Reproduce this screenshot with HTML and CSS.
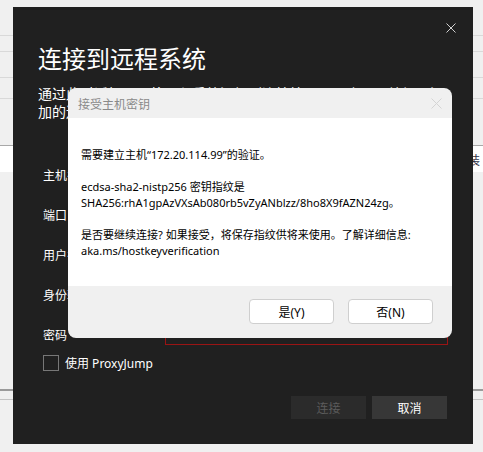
FILE: index.html
```html
<!DOCTYPE html>
<html lang="zh-CN">
<head>
<meta charset="utf-8">
<title>连接到远程系统</title>
<link rel="stylesheet" href="styles.css">
</head>
<body>
<div class="page">
  <div class="bg-row r1"></div>
  <div class="bg-row r2"></div>
  <div class="bg-row r3"></div>
  <div class="bg-row r4"></div>
  <div class="bg-row r5"></div>
  <div class="bg-row r6"><span class="bg-text">装</span></div>
  <div class="bg-row r7"></div>
  <div class="bg-row r8"></div>
  <div class="bg-row r9"></div>

  <div class="dialog">
    <button class="dialog-close" aria-label="关闭">
      <svg width="10" height="10" viewBox="0 0 10 10"><path d="M0.5 0.5L9.5 9.5M9.5 0.5L0.5 9.5" stroke="#d0d0d0" stroke-width="1" fill="none"/></svg>
    </button>
    <h1 class="dialog-title">连接到远程系统</h1>
    <p class="dialog-desc">通过此对话框可以将远程系统添加到连接管理器，也可以编辑已添加的连接。</p>
    <div class="form">
      <div class="form-row"><span class="label">主机名 *</span><span class="input"></span></div>
      <div class="form-row"><span class="label">端口 *</span><span class="input"></span></div>
      <div class="form-row"><span class="label">用户名 *</span><span class="input"></span></div>
      <div class="form-row"><span class="label">身份验证类型</span><span class="input"></span></div>
      <div class="form-row"><span class="label">密码 *</span><span class="input input-error"></span></div>
    </div>
    <label class="check-row"><span class="checkbox"></span><span class="check-label">使用 ProxyJump</span></label>
    <div class="dialog-actions">
      <button class="btn-dark btn-disabled">连接</button>
      <button class="btn-dark">取消</button>
    </div>
  </div>

  <div class="modal">
    <div class="modal-header">
      <span class="modal-title">接受主机密钥</span>
      <span class="modal-close">
        <svg width="11" height="11" viewBox="0 0 11 11"><path d="M0.5 0.5L10.5 10.5M10.5 0.5L0.5 10.5" stroke="#d4d4d4" stroke-width="1" fill="none"/></svg>
      </span>
    </div>
    <div class="modal-body">
      <p>需要建立主机“172.20.114.99”的验证。</p>
      <p>ecdsa-sha2-nistp256 密钥指纹是<br>SHA256:rhA1gpAzVXsAb080rb5vZyANblzz/8ho8X9fAZN24zg。</p>
      <p>是否要继续连接? 如果接受，将保存指纹供将来使用。了解详细信息:<br>aka.ms/hostkeyverification</p>
    </div>
    <div class="modal-footer">
      <button class="btn-light">是(Y)</button>
      <button class="btn-light">否(N)</button>
    </div>
  </div>
</div>
</body>
</html>
```

FILE: styles.css
```css
* { box-sizing: border-box; }
html, body { margin: 0; padding: 0; }
body {
  width: 483px;
  height: 452px;
  overflow: hidden;
  background: #f0f0f0;
  font-family: "Noto Sans", "Noto Sans CJK SC", sans-serif;
}
.page {
  position: relative;
  width: 483px;
  height: 452px;
  display: flex;
  flex-direction: column;
}
.bg-row { flex: none; }
.r1 { height: 36px; border-bottom: 1px solid #d9d9d9; }
.r2 { height: 16px; border-bottom: 1px solid #d9d9d9; }
.r3 { height: 26px; border-bottom: 1px solid #d9d9d9; }
.r4 { height: 21px; border-bottom: 1px solid #d9d9d9; }
.r5 { height: 47px; border-bottom: 1px solid #a8a8a8; }
.r6 { height: 26px; background: #fff; display: flex; justify-content: flex-end; align-items: center; }
.bg-text { font-size: 12px; color: #334; margin-right: 3px; font-family: "Noto Sans CJK SC", sans-serif; }
.r7 { height: 219px; border-bottom: 2px solid #9a9a9a; }
.r8 { height: 9px; border-bottom: 1px solid #c4c4c4; }
.r9 { flex: 1; }

.dialog {
  position: absolute;
  left: 13px;
  top: 7px;
  width: 460px;
  height: 437px;
  background: #202020;
  padding: 35px 25px 0 25px;
  color: #fff;
  display: flex;
  flex-direction: column;
}
.dialog-close {
  position: absolute;
  right: 17px;
  top: 16px;
  width: 10px;
  height: 10px;
  padding: 0;
  border: 0;
  background: none;
  display: flex;
}
.dialog-title {
  margin: 0;
  font-size: 24px;
  line-height: 32px;
  font-weight: 400;
  font-family: "Noto Sans CJK SC", sans-serif;
}
.dialog-desc {
  margin: 10px 0 0 0;
  font-size: 14px;
  line-height: 18px;
  font-family: "Noto Sans CJK SC", sans-serif;
}
.form {
  margin-top: 42px;
  display: flex;
  flex-direction: column;
  gap: 16px;
  padding-left: 5px;
}
.form-row {
  height: 24px;
  display: grid;
  grid-template-columns: 122px 1fr;
  align-items: center;
}
.label { font-size: 12px; color: #fff; font-family: "Noto Sans CJK SC", sans-serif; }
.input {
  height: 22px;
  background: #202020;
  border: 1px solid #555;
}
.input-error { border-color: #9a1414; }

.check-row {
  margin-top: 9px;
  padding-left: 5px;
  display: flex;
  align-items: center;
  gap: 6px;
  height: 16px;
}
.checkbox {
  width: 16px;
  height: 16px;
  border: 1px solid #777;
  background: #202020;
}
.check-label { font-size: 12px; color: #fff; }

.dialog-actions {
  margin-top: 25px;
  display: flex;
  justify-content: flex-end;
  gap: 6px;
  padding-right: 1px;
}
.btn-dark {
  width: 75px;
  height: 23px;
  border: 0;
  padding: 0;
  background: #373737;
  color: #fff;
  font-size: 12px;
  font-family: "Noto Sans CJK SC", sans-serif;
}
.btn-disabled { background: #2b2b2b; color: #5c5c5c; }

.modal {
  position: absolute;
  left: 68px;
  top: 88px;
  width: 384px;
  height: 250px;
  border-radius: 8px;
  overflow: hidden;
  display: flex;
  flex-direction: column;
  background: #f0f0f0;
}
.modal-header {
  height: 30px;
  flex: none;
  display: flex;
  align-items: center;
  justify-content: space-between;
  padding: 0 10px 0 10px;
}
.modal-title {
  font-size: 12px;
  color: #8a8a8a;
  font-family: "Noto Sans CJK SC", sans-serif;
}
.modal-close { display: flex; margin-top: 1px; }
.modal-body {
  height: 168px;
  flex: none;
  background: #fff;
  padding: 29px 13px 0 13px;
  font-size: 11px;
  line-height: 16px;
  color: #000;
}
.modal-body p { margin: 0 0 16px 0; }
.modal-footer {
  flex: 1;
  display: flex;
  justify-content: flex-end;
  align-items: flex-start;
  gap: 14px;
  padding: 13px 19px 0 0;
}
.btn-light {
  width: 85px;
  height: 25px;
  background: #fff;
  border: 1px solid #cfcfcf;
  border-radius: 4px;
  font-size: 12px;
  color: #000;
  padding: 0;
  font-family: "Noto Sans", "Noto Sans CJK SC", sans-serif;
}
```
